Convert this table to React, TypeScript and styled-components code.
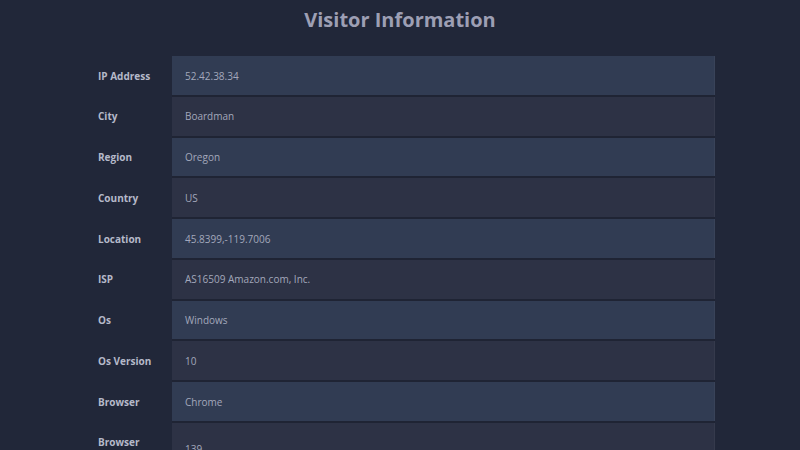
import React from "react";
import styled, { createGlobalStyle } from "styled-components";

const GlobalStyle = createGlobalStyle`
  html, body {
    margin: 0;
    padding: 0;
    background: #212739;
  }
  body {
    font-family: "Open Sans", "Noto Sans", sans-serif;
  }
`;

const Page = styled.div`
  padding-top: 6px;
  min-height: 450px;
  box-sizing: border-box;
`;

const Title = styled.h1`
  margin: 0 0 22px;
  text-align: center;
  font-size: 20px;
  line-height: 28px;
  font-weight: 700;
  color: #9d9fb4;
`;

const Table = styled.table`
  width: 630px;
  margin: 0 auto;
  border-collapse: collapse;
  table-layout: fixed;
`;

const Label = styled.th`
  width: 61px;
  padding: 13.6px 13px 11.4px;
  text-align: left;
  vertical-align: top;
  font-size: 10px;
  line-height: 13.78px;
  font-weight: 700;
  color: #b5b9c9;
  border-bottom: 2px solid transparent;
`;

const Value = styled.td<{ $odd: boolean }>`
  padding: 13.6px 13px 11.4px;
  font-size: 10px;
  line-height: 13.78px;
  color: #a3a8bb;
  vertical-align: middle;
  background: ${(p) => (p.$odd ? "#313c53" : "#2d3245")};
  border-bottom: 2px solid #1f2434;
  box-shadow: inset -1px 0 0 rgba(255, 255, 255, 0.04);
`;

const rows: [string, string][] = [
  ["IP Address", "52.42.38.34"],
  ["City", "Boardman"],
  ["Region", "Oregon"],
  ["Country", "US"],
  ["Location", "45.8399,-119.7006"],
  ["ISP", "AS16509 Amazon.com, Inc."],
  ["Os", "Windows"],
  ["Os Version", "10"],
  ["Browser", "Chrome"],
  ["Browser Version", "139"],
];

export default function App() {
  return (
    <>
      <GlobalStyle />
      <Page>
        <Title>Visitor Information</Title>
        <Table>
          <tbody>
            {rows.map(([k, v], i) => (
              <tr key={k}>
                <Label>{k}</Label>
                <Value $odd={i % 2 === 0}>{v}</Value>
              </tr>
            ))}
          </tbody>
        </Table>
      </Page>
    </>
  );
}
